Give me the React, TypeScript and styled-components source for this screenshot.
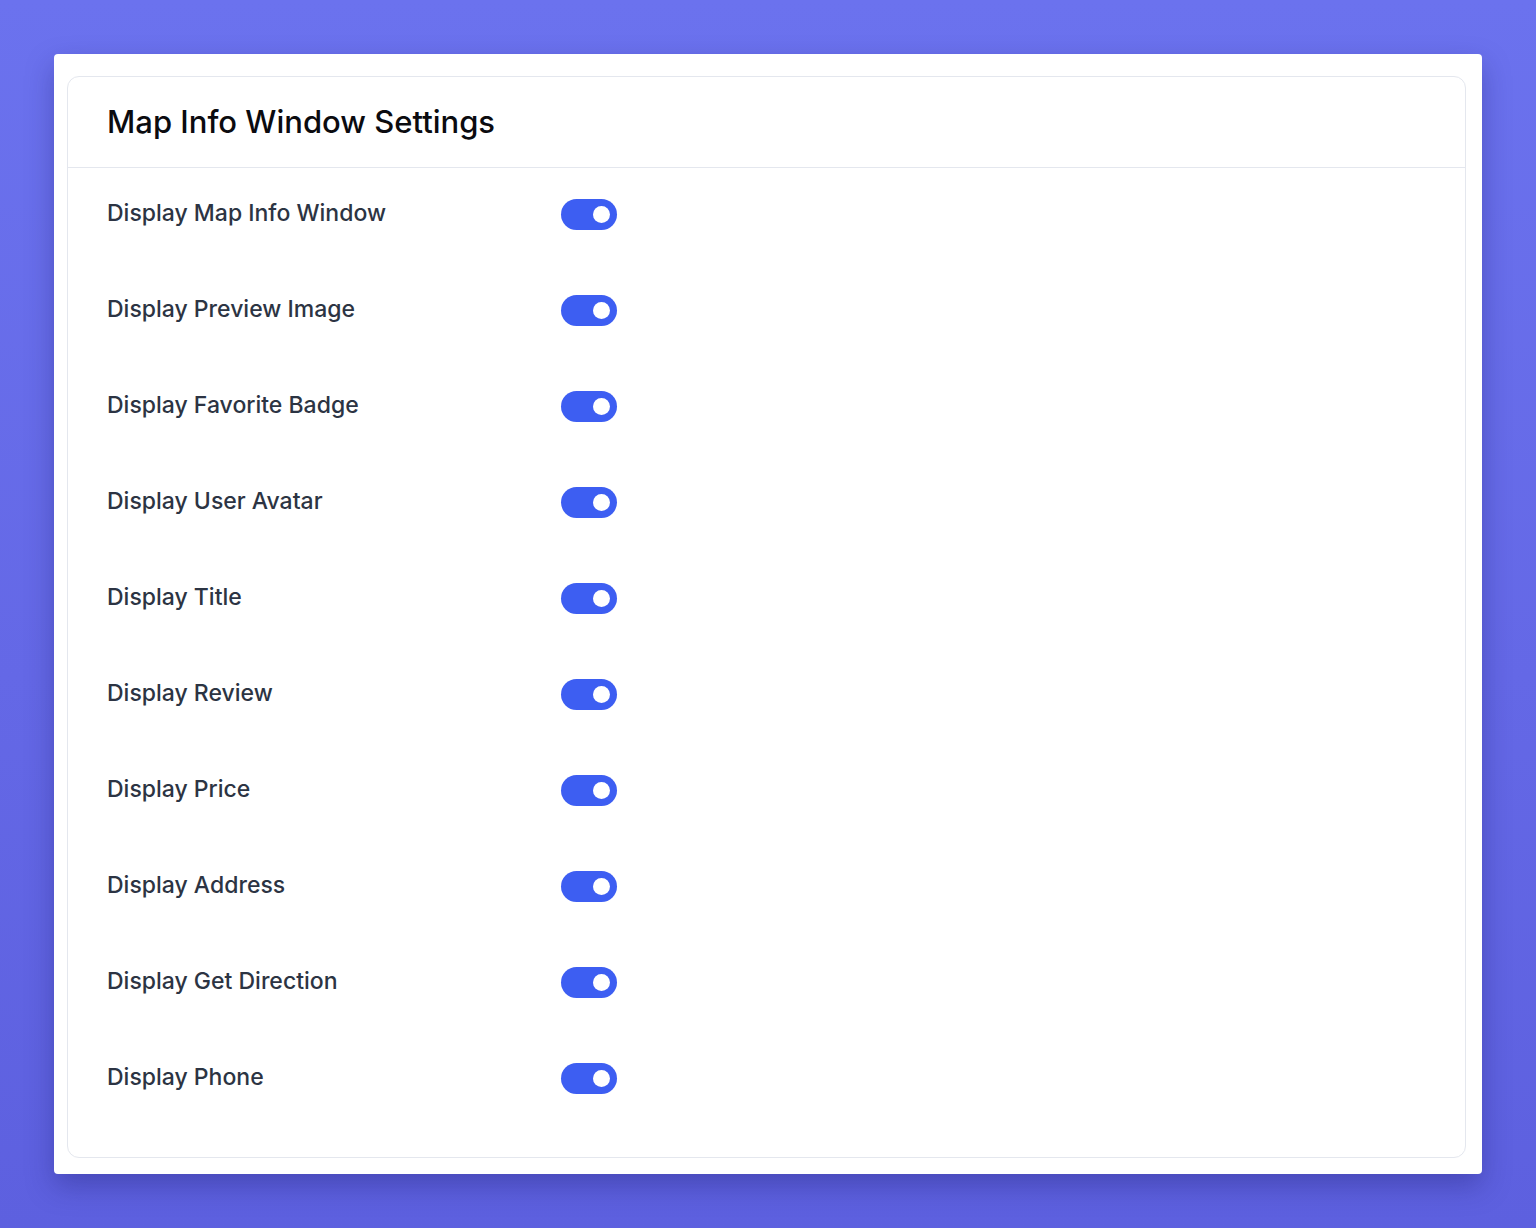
import React, { useState } from 'react'
import styled, { createGlobalStyle } from 'styled-components'

const GlobalStyle = createGlobalStyle`
  html, body {
    margin: 0;
    padding: 0;
  }
  body {
    font-family: Inter, "Noto Sans", sans-serif;
    -webkit-font-smoothing: antialiased;
  }
  * {
    box-sizing: border-box;
  }
`

const Page = styled.div`
  min-height: 1228px;
  padding: 54px;
  background: linear-gradient(180deg, #6b72ee 0%, #6468e6 55%, #5d60df 100%);
`

const Frame = styled.div`
  height: 1120px;
  padding: 22px 16px 16px 13px;
  background: #ffffff;
  border-radius: 4px;
  box-shadow: 0 12px 28px rgba(28, 28, 110, 0.35);
`

const Card = styled.section`
  height: 100%;
  border: 1px solid #e4e7ee;
  border-radius: 12px;
  background: #ffffff;
`

const CardHeader = styled.header`
  padding: 26px 39px 26px;
  border-bottom: 1px solid #e4e7ee;
`

const Title = styled.h2`
  margin: 0;
  font-size: 31px;
  line-height: 38px;
  font-weight: 500;
  color: #0b0b0f;
`

const CardBody = styled.div`
  display: flex;
  flex-direction: column;
  gap: 66px;
  padding: 31px 39px 0;
`

const Row = styled.div`
  display: flex;
  align-items: center;
  height: 30px;
`

const Label = styled.span`
  width: 454px;
  font-size: 23px;
  font-weight: 500;
  color: #2c3443;
  margin-top: -2px;
`

const Track = styled.button<{ $on: boolean }>`
  position: relative;
  width: 56px;
  height: 31px;
  padding: 0;
  border: none;
  border-radius: 16px;
  cursor: pointer;
  background: ${(p) => (p.$on ? '#3d5ef2' : '#cbd2dc')};
  transition: background 0.15s;

  &::after {
    content: '';
    position: absolute;
    top: 7px;
    left: ${(p) => (p.$on ? '32px' : '8px')};
    width: 17px;
    height: 17px;
    border-radius: 50%;
    background: #ffffff;
    transition: left 0.15s;
  }
`

const settings = [
  'Display Map Info Window',
  'Display Preview Image',
  'Display Favorite Badge',
  'Display User Avatar',
  'Display Title',
  'Display Review',
  'Display Price',
  'Display Address',
  'Display Get Direction',
  'Display Phone',
]

const App: React.FC = () => {
  const [values, setValues] = useState<boolean[]>(settings.map(() => true))

  const toggle = (i: number) => {
    setValues((v) => v.map((x, j) => (j === i ? !x : x)))
  }

  return (
    <>
      <GlobalStyle />
      <Page>
        <Frame>
          <Card>
            <CardHeader>
              <Title>Map Info Window Settings</Title>
            </CardHeader>
            <CardBody>
              {settings.map((label, i) => (
                <Row key={label}>
                  <Label>{label}</Label>
                  <Track
                    type="button"
                    aria-label={label}
                    $on={values[i]}
                    onClick={() => toggle(i)}
                  />
                </Row>
              ))}
            </CardBody>
          </Card>
        </Frame>
      </Page>
    </>
  )
}

export default App
